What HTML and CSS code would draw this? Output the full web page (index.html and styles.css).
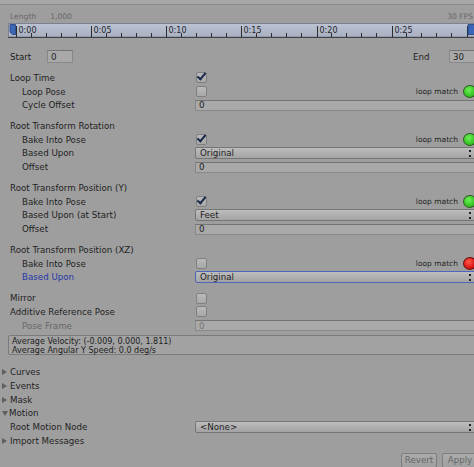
FILE: index.html
```html
<!DOCTYPE html>
<html lang="en">
<head>
    <meta charset="UTF-8">
    <title>Animation Clip Import Settings</title>
    <link rel="stylesheet" href="styles.css">
</head>
<body>
<div class="inspector">
    <div class="topbar"></div>

    <div class="clip-info">
        <span>Length</span>
        <span class="len-value">1,000</span>
        <span class="fps">30 FPS</span>
    </div>

    <!-- frame ruler, one tick per frame, labels every 5 frames -->
    <div class="timeline">
        <svg width="478" height="15" viewBox="0 0 478 15">
            <defs>
                <linearGradient id="barFill" x1="0" y1="0" x2="0" y2="1">
                    <stop offset="0" stop-color="#bcc3d2"/>
                    <stop offset="1" stop-color="#a8b0c1"/>
                </linearGradient>
            </defs>
            <rect x="8.5" y="0.5" width="470" height="13.5" fill="url(#barFill)" stroke="#7d8290"/>
            <line x1="8" y1="14.5" x2="478" y2="14.5" stroke="#3f4147"/>
            <path d="M31.5 10V14M46.5 10V14M61.5 10V14M76.5 10V14M106.5 10V14M121.5 10V14M136.5 10V14M151.5 10V14M181.5 10V14M196.5 10V14M211.5 10V14M226.5 10V14M256.5 10V14M271.5 10V14M286.5 10V14M301.5 10V14M331.5 10V14M346.5 10V14M361.5 10V14M376.5 10V14M406.5 10V14M421.5 10V14M436.5 10V14M451.5 10V14" stroke="#2b2d33"/>
            <path d="M16.5 3V14M91.5 3V14M166.5 3V14M241.5 3V14M317.5 3V14M392.5 3V14M467.5 3V14" stroke="#2b2d33"/>
            <g class="ruler-text">
                <text x="18.5" y="9.5">0:00</text>
                <text x="93.5" y="9.5">0:05</text>
                <text x="168.5" y="9.5">0:10</text>
                <text x="243.5" y="9.5">0:15</text>
                <text x="319.5" y="9.5">0:20</text>
                <text x="394.5" y="9.5">0:25</text>
            </g>
            <polygon points="10,1.5 15.5,1.5 15.5,11.5 12.5,11.5 10,9" fill="#3c66b8" stroke="#24407e" stroke-width="0.8"/>
            <polygon points="468,1.5 474,1.5 476,4 476,11.5 468,11.5" fill="#3c66b8" stroke="#24407e" stroke-width="0.8"/>
        </svg>
    </div>

    <div class="range-row">
        <span class="range-label">Start</span>
        <span class="field range-field">0</span>
        <span class="range-label end-label">End</span>
        <span class="field range-field end-field">30</span>
    </div>

    <div class="group first">
        <div class="row">
            <div class="label">Loop Time</div>
            <div class="control"><span class="check on"></span></div>
        </div>
        <div class="row sub">
            <div class="label">Loop Pose</div>
            <div class="control">
                <span class="check"></span>
                <span class="loop-match">loop match <span class="lamp green"></span></span>
            </div>
        </div>
        <div class="row sub">
            <div class="label">Cycle Offset</div>
            <div class="control"><span class="field wide">0</span></div>
        </div>
    </div>

    <div class="group">
        <div class="row">
            <div class="label">Root Transform Rotation</div>
        </div>
        <div class="row sub">
            <div class="label">Bake Into Pose</div>
            <div class="control">
                <span class="check on"></span>
                <span class="loop-match">loop match <span class="lamp green"></span></span>
            </div>
        </div>
        <div class="row sub">
            <div class="label">Based Upon</div>
            <div class="control"><span class="popup">Original<span class="popup-arrow"></span></span></div>
        </div>
        <div class="row sub">
            <div class="label">Offset</div>
            <div class="control"><span class="field wide">0</span></div>
        </div>
    </div>

    <div class="group">
        <div class="row">
            <div class="label">Root Transform Position (Y)</div>
        </div>
        <div class="row sub">
            <div class="label">Bake Into Pose</div>
            <div class="control">
                <span class="check on"></span>
                <span class="loop-match">loop match <span class="lamp green"></span></span>
            </div>
        </div>
        <div class="row sub">
            <div class="label">Based Upon (at Start)</div>
            <div class="control"><span class="popup">Feet<span class="popup-arrow"></span></span></div>
        </div>
        <div class="row sub">
            <div class="label">Offset</div>
            <div class="control"><span class="field wide">0</span></div>
        </div>
    </div>

    <div class="group">
        <div class="row">
            <div class="label">Root Transform Position (XZ)</div>
        </div>
        <div class="row sub">
            <div class="label">Bake Into Pose</div>
            <div class="control">
                <span class="check"></span>
                <span class="loop-match">loop match <span class="lamp red"></span></span>
            </div>
        </div>
        <div class="row sub focused">
            <div class="label">Based Upon</div>
            <div class="control"><span class="popup">Original<span class="popup-arrow"></span></span></div>
        </div>
    </div>

    <div class="group">
        <div class="row">
            <div class="label">Mirror</div>
            <div class="control"><span class="check"></span></div>
        </div>
        <div class="row">
            <div class="label">Additive Reference Pose</div>
            <div class="control"><span class="check"></span></div>
        </div>
        <div class="row sub disabled">
            <div class="label">Pose Frame</div>
            <div class="control"><span class="field wide">0</span></div>
        </div>
    </div>

    <div class="stats">
        <div>Average Velocity: (-0.009, 0.000, 1.811)</div>
        <div>Average Angular Y Speed: 0.0 deg/s</div>
    </div>

    <div class="foldouts">
        <div class="fold"><span class="arrow"></span>Curves</div>
        <div class="fold"><span class="arrow"></span>Events</div>
        <div class="fold"><span class="arrow"></span>Mask</div>
        <div class="fold open"><span class="arrow"></span>Motion</div>
        <div class="row">
            <div class="label">Root Motion Node</div>
            <div class="control"><span class="popup">&lt;None&gt;<span class="popup-arrow"></span></span></div>
        </div>
        <div class="fold"><span class="arrow"></span>Import Messages</div>
    </div>

    <div class="footer">
        <span class="btn">Revert</span>
        <span class="btn">Apply</span>
    </div>
</div>
</body>
</html>
```

FILE: styles.css
```css
body {
    margin: 0;
    overflow: hidden;
    background: #9e9e9e;
    font-family: "DejaVu Sans", sans-serif;
    font-size: 8.7px;
    color: #1e1e1e;
}
.inspector {
    width: 478px;
}
.topbar {
    height: 4px;
    background: #a7a7a7;
    border-bottom: 1px solid #8a8a8a;
}

/* clip header */
.clip-info {
    display: flex;
    align-items: center;
    height: 13px;
    margin-top: 5px;
    padding-left: 10px;
    font-size: 7.6px;
    color: #676767;
}
.len-value {
    margin-left: 14px;
}
.fps {
    margin-left: auto;
    padding-right: 5px;
}
.timeline svg {
    display: block;
}
.ruler-text {
    font-family: "DejaVu Sans", sans-serif;
    font-size: 8px;
    fill: #23252b;
}
.range-row {
    display: flex;
    align-items: center;
    height: 13px;
    margin-top: 12px;
    padding-left: 10px;
}
.range-label {
    width: 37px;
}
.end-label {
    margin-left: auto;
    width: 36px;
}
.range-field {
    width: 26px;
    height: 13px;
}
.end-field {
    width: 29px;
}

/* property rows */
.group {
    margin-top: 7.2px;
}
.group.first {
    margin-top: 8px;
}
.row {
    display: flex;
    align-items: center;
    height: 13.7px;
}
.label {
    width: 195px;
    padding-left: 10px;
    box-sizing: border-box;
    white-space: nowrap;
}
.row.sub .label {
    padding-left: 22px;
}
.row.focused .label {
    color: #2538a8;
}
.row.disabled .label {
    color: #686868;
}
.row.disabled .field {
    color: #747474;
}
.control {
    flex: 1;
    display: flex;
    align-items: center;
    min-width: 0;
    margin-right: 1px;
}

.field {
    display: flex;
    align-items: center;
    box-sizing: border-box;
    padding-left: 3px;
    background: #a9a9a9;
    border: 1px solid #888;
    border-top-color: #747474;
}
.field.wide {
    flex: 1;
    height: 11px;
}

.check {
    position: relative;
    width: 9px;
    height: 9px;
    margin-left: 1px;
    border: 1px solid #808080;
    border-radius: 2px;
    background: linear-gradient(#bababa, #a8a8a8);
}
.check.on::after {
    content: "";
    position: absolute;
    left: 1px;
    top: -2px;
    width: 3px;
    height: 7px;
    margin-left: 1px;
    border-right: 2px solid #1b2849;
    border-bottom: 2px solid #1b2849;
    transform: rotate(40deg);
}

.loop-match {
    margin-left: auto;
    display: flex;
    align-items: center;
    gap: 5px;
    font-size: 7.5px;
}
.lamp {
    width: 12px;
    height: 11px;
    border-radius: 50%;
}
.lamp.green {
    border: 1px solid #2c5f1c;
    background: radial-gradient(circle at 40% 35%, #6ef05a, #35c222 60%, #249016);
}
.lamp.red {
    border: 1px solid #6a1010;
    background: radial-gradient(circle at 40% 35%, #ff5a4a, #d81414 60%, #a00c0c);
}

.popup {
    flex: 1;
    display: flex;
    align-items: center;
    justify-content: space-between;
    height: 12px;
    box-sizing: border-box;
    padding: 0 5px 0 4px;
    border: 1px solid #767676;
    border-radius: 2px;
    background: linear-gradient(#bdbdbd, #a3a3a3);
}
.row.focused .popup {
    border-color: #4f64bc;
}
.popup-arrow {
    width: 2px;
    height: 7px;
    background:
        linear-gradient(#222, #222) top / 100% 2px no-repeat,
        linear-gradient(#222, #222) bottom / 100% 2px no-repeat;
}

/* root motion summary */
.stats {
    margin: 2.7px 0 0 8px;
    height: 20px;
    box-sizing: border-box;
    padding: 1px 3px 0;
    border: 1px solid #7b7b7b;
    border-radius: 2px;
    background: #a2a2a2;
    font-size: 8px;
    line-height: 9px;
}

.foldouts {
    margin-top: 10px;
}
.fold {
    display: flex;
    align-items: center;
    height: 13.8px;
    padding-left: 2px;
}
.arrow {
    width: 0;
    height: 0;
    margin-right: 3px;
    border-left: 5px solid #5f5f5f;
    border-top: 3.5px solid transparent;
    border-bottom: 3.5px solid transparent;
}
.fold.open .arrow {
    margin-right: 1px;
    border-left: 3.5px solid transparent;
    border-right: 3.5px solid transparent;
    border-top: 5px solid #5f5f5f;
    border-bottom: none;
}
.foldouts .row {
    height: 13.8px;
}

.footer {
    display: flex;
    justify-content: flex-end;
    gap: 5px;
    margin-top: 5px;
}
.btn {
    display: flex;
    align-items: center;
    justify-content: center;
    width: 36px;
    height: 15px;
    box-sizing: border-box;
    border: 1px solid #7d7d7d;
    border-radius: 2px;
    background: linear-gradient(#ababab, #a0a0a0);
    color: #666;
}
```
